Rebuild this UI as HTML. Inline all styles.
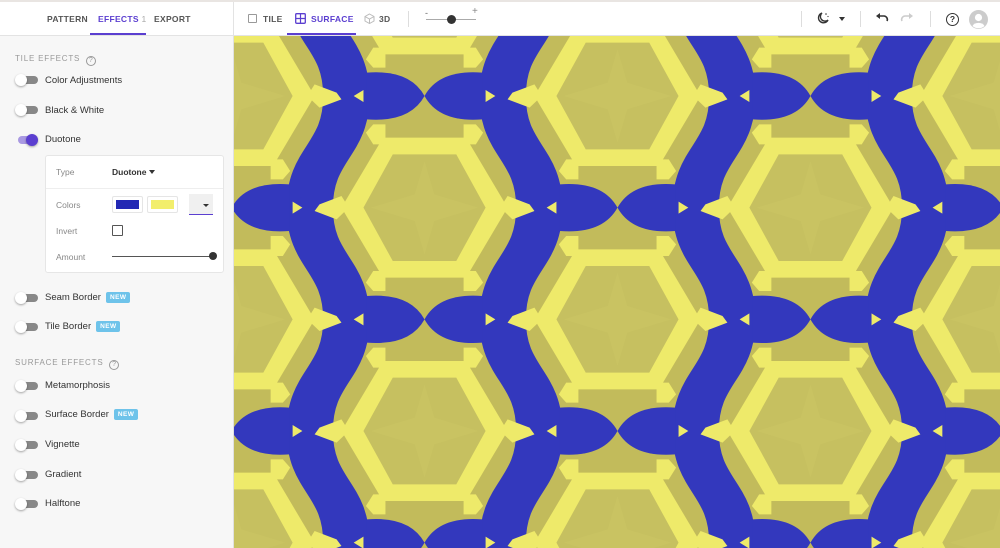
<!DOCTYPE html>
<html><head><meta charset="utf-8"><style>
*{box-sizing:border-box;margin:0;padding:0}
html,body{width:1000px;height:548px;overflow:hidden}
body{font-family:"Liberation Sans",sans-serif;background:#fff;position:relative;color:#333}
.topstrip{position:absolute;left:0;top:0;width:1000px;height:2px;background:#e9e5e2}
.bar{position:absolute;left:0;top:2px;width:1000px;height:34px;background:#fff;border-bottom:1px solid #e3e3e3}
.tab{position:absolute;top:12px;font-size:8.5px;font-weight:bold;letter-spacing:.3px;color:#555}
.side{position:absolute;left:0;top:36px;width:234px;height:512px;background:#f7f7f7;border-right:1px solid #e0e0e0}
.sec{position:absolute;left:15px;font-size:8px;letter-spacing:.8px;color:#999}
.q{display:inline-block;width:10px;height:10px;border:1px solid #999;border-radius:50%;font-size:7px;text-align:center;line-height:8px;margin-left:6px;vertical-align:-1px}
.row{position:absolute;left:15px;font-size:9.5px;color:#333}
.tg{position:absolute;left:15px;width:23px;height:12px}
.tg .tr{position:absolute;left:3px;top:2px;width:20px;height:8px;border-radius:4px;background:#888}
.tg .kn{position:absolute;left:0;top:0;width:12px;height:12px;border-radius:50%;background:#fff;box-shadow:0 1px 2px rgba(0,0,0,.35)}
.new{display:inline-block;background:#6ec3ea;color:#fff;font-size:6.5px;font-weight:bold;padding:2px 4px;border-radius:2px;margin-left:5px;vertical-align:1px;letter-spacing:.4px}
.panel{position:absolute;left:45px;top:155px;width:179px;height:118px;background:#fff;border:1px solid #e6e6e6;border-radius:3px}
.lbl{position:absolute;left:10px;font-size:8.5px;color:#888}
</style></head><body>
<div class="topstrip"></div>
<div class="bar">
 <div class="tab" style="left:47px">PATTERN</div>
 <div class="tab" style="left:98px;color:#5b3fd0">EFFECTS <span style="font-weight:normal;color:#aaa">1</span></div>
 <div style="position:absolute;left:90px;top:31px;width:56px;height:2px;background:#5b3fd0"></div>
 <div class="tab" style="left:154px">EXPORT</div>
 <div style="position:absolute;left:233px;top:0;width:1px;height:34px;background:#e3e3e3"></div>
 <div style="position:absolute;left:248px;top:12px;width:9px;height:9px;border:1px solid #999;border-radius:1px"></div>
 <div class="tab" style="left:263px">TILE</div>
 <svg style="position:absolute;left:295px;top:11px" width="11" height="11" viewBox="0 0 11 11"><rect x="0.7" y="0.7" width="9.6" height="9.6" rx="1" fill="none" stroke="#5b3fd0" stroke-width="1.3"/><path d="M5.5 1V10M1 5.5H10" stroke="#5b3fd0" stroke-width="1.2"/></svg>
 <div class="tab" style="left:311px;color:#5b3fd0">SURFACE</div>
 <div style="position:absolute;left:287px;top:31px;width:69px;height:2px;background:#5b3fd0"></div>
 <svg style="position:absolute;left:364px;top:11px" width="11" height="11" viewBox="0 0 11 11"><path d="M5.5 1L10 3.5V8L5.5 10.5L1 8V3.5Z M1 3.5L5.5 6L10 3.5M5.5 6V10.5" fill="none" stroke="#bbb" stroke-width="1"/></svg>
 <div class="tab" style="left:379px">3D</div>
 <div style="position:absolute;left:408px;top:9px;width:1px;height:16px;background:#ddd"></div>
 <div style="position:absolute;left:425px;top:6px;font-size:9px;color:#666">-</div>
 <div style="position:absolute;left:472px;top:4px;font-size:10px;color:#888">+</div>
 <div style="position:absolute;left:426px;top:17px;width:50px;height:1px;background:#aaa"></div>
 <div style="position:absolute;left:447px;top:13px;width:9px;height:9px;border-radius:50%;background:#333"></div>
 <div style="position:absolute;left:801px;top:9px;width:1px;height:16px;background:#ddd"></div>
 <svg style="position:absolute;left:816px;top:9px" width="14" height="14" viewBox="0 0 14 14"><path d="M6 2A5 5 0 1 0 12 9A4 4 0 0 1 6 2Z" fill="none" stroke="#333" stroke-width="1.4"/><circle cx="10" cy="3" r=".8" fill="#333"/><circle cx="12" cy="5.5" r=".6" fill="#333"/></svg>
 <div style="position:absolute;left:839px;top:15px;border-left:3.5px solid transparent;border-right:3.5px solid transparent;border-top:4px solid #333"></div>
 <div style="position:absolute;left:860px;top:9px;width:1px;height:16px;background:#ddd"></div>
 <svg style="position:absolute;left:875px;top:10px" width="14" height="12" viewBox="0 0 14 12"><path d="M3 4H9A3.5 3.5 0 0 1 12 9" fill="none" stroke="#333" stroke-width="1.6"/><path d="M1 4L5 1V7Z" fill="#333"/></svg>
 <svg style="position:absolute;left:900px;top:10px" width="14" height="12" viewBox="0 0 14 12"><path d="M11 4H5A3.5 3.5 0 0 0 2 9" fill="none" stroke="#ccc" stroke-width="1.6"/><path d="M13 4L9 1V7Z" fill="#ccc"/></svg>
 <div style="position:absolute;left:930px;top:9px;width:1px;height:16px;background:#ddd"></div>
 <div style="position:absolute;left:946px;top:11px;width:13px;height:13px;border:1.4px solid #333;border-radius:50%;font-size:8.5px;font-weight:bold;text-align:center;line-height:11px">?</div>
 <svg style="position:absolute;left:969px;top:8px" width="19" height="19" viewBox="0 0 19 19"><circle cx="9.5" cy="9.5" r="9.5" fill="#ccc"/><circle cx="9.5" cy="7.5" r="3.6" fill="#fff"/><path d="M3.5 16A6.5 5 0 0 1 15.5 16A9 9 0 0 1 3.5 16Z" fill="#fff"/></svg>
</div>

<div class="side">
 <div class="sec" style="top:18px">TILE EFFECTS<span class="q">?</span></div>
 <div class="tg" style="top:38px"><div class="tr"></div><div class="kn"></div></div><div class="row" style="left:45px;top:39px">Color Adjustments</div>
 <div class="tg" style="top:68px"><div class="tr"></div><div class="kn"></div></div><div class="row" style="left:45px;top:69px">Black &amp; White</div>
 <div class="tg" style="top:98px"><div class="tr" style="background:#a999e2"></div><div class="kn" style="left:11px;background:#5b3fd0"></div></div><div class="row" style="left:45px;top:98px">Duotone</div>
 <div class="tg" style="top:256px"><div class="tr"></div><div class="kn"></div></div><div class="row" style="left:45px;top:256px">Seam Border<span class="new">NEW</span></div>
 <div class="tg" style="top:285px"><div class="tr"></div><div class="kn"></div></div><div class="row" style="left:45px;top:285px">Tile Border<span class="new">NEW</span></div>
 <div class="sec" style="top:322px">SURFACE EFFECTS<span class="q">?</span></div>
 <div class="tg" style="top:344px"><div class="tr"></div><div class="kn"></div></div><div class="row" style="left:45px;top:344px">Metamorphosis</div>
 <div class="tg" style="top:374px"><div class="tr"></div><div class="kn"></div></div><div class="row" style="left:45px;top:373px">Surface Border<span class="new">NEW</span></div>
 <div class="tg" style="top:403px"><div class="tr"></div><div class="kn"></div></div><div class="row" style="left:45px;top:403px">Vignette</div>
 <div class="tg" style="top:433px"><div class="tr"></div><div class="kn"></div></div><div class="row" style="left:45px;top:433px">Gradient</div>
 <div class="tg" style="top:462px"><div class="tr"></div><div class="kn"></div></div><div class="row" style="left:45px;top:462px">Halftone</div>
</div>
<div class="panel">
 <div class="lbl" style="top:11px">Type</div>
 <div style="position:absolute;left:66px;top:11px;font-size:8.5px;font-weight:bold;color:#333">Duotone</div>
 <div style="position:absolute;left:103px;top:14px;border-left:3.5px solid transparent;border-right:3.5px solid transparent;border-top:4px solid #333"></div>
 <div style="position:absolute;left:0;top:32px;width:177px;height:1px;background:#eee"></div>
 <div class="lbl" style="top:44px">Colors</div>
 <div style="position:absolute;left:66px;top:40px;width:31px;height:17px;border:1px solid #e5e5e5;border-radius:2px;padding:3px"><div style="width:100%;height:100%;background:#2228b4"></div></div>
 <div style="position:absolute;left:101px;top:40px;width:31px;height:17px;border:1px solid #e5e5e5;border-radius:2px;padding:3px"><div style="width:100%;height:100%;background:#f2ee6c"></div></div>
 <div style="position:absolute;left:143px;top:38px;width:24px;height:21px;background:#f0f0f0;border-bottom:1.5px solid #5b3fd0"></div>
 <div style="position:absolute;left:157px;top:48px;border-left:3px solid transparent;border-right:3px solid transparent;border-top:3.5px solid #333"></div>
 <div class="lbl" style="top:70px">Invert</div>
 <div style="position:absolute;left:66px;top:69px;width:11px;height:11px;border:1.3px solid #555;border-radius:1px"></div>
 <div class="lbl" style="top:96px">Amount</div>
 <div style="position:absolute;left:66px;top:100px;width:102px;height:1px;background:#555"></div>
 <div style="position:absolute;left:163px;top:96px;width:8px;height:8px;border-radius:50%;background:#333"></div>
</div>

<svg style="position:absolute;left:234px;top:36px;display:block" width="766" height="512" viewBox="0 0 1568 1536" preserveAspectRatio="none">
<defs>
 <g id="hx">
  <polygon points="-170,0 -85,-210 85,-210 170,0 85,210 -85,210" fill="#eeea6a"/>
  <polygon points="-125,0 -65,-160 65,-160 125,0 65,160 -65,160" fill="#c6c060"/>
  <path d="M0,-140L20,-40L110,0L20,40L0,140L-20,40L-110,0L-20,-40Z" fill="#cbc564" opacity=".7"/>
 </g>
 <g id="bw">
  <path d="M-118,-70Q-30,-80 0,0Q-30,80 -118,70Z" fill="#3338bd"/>
  <path d="M118,-70Q30,-80 0,0Q30,80 118,70Z" fill="#3338bd"/>
 </g>
 <g id="tri">
  <polygon points="-145,0 -125,-18 -125,18" fill="#eeea6a"/>
  <polygon points="145,0 125,-18 125,18" fill="#eeea6a"/>
  <polygon points="-225,-35 -180,-10 -170,10 -215,35 -240,0" fill="#eeea6a"/>
  <polygon points="225,-35 180,-10 170,10 215,35 240,0" fill="#eeea6a"/>
  <polygon points="-105,-85 -80,-85 -80,-145 -105,-145 -120,-110" fill="#eeea6a"/>
  <polygon points="105,-85 80,-85 80,-145 105,-145 120,-110" fill="#eeea6a"/>
  <polygon points="-105,85 -80,85 -80,145 -105,145 -120,110" fill="#eeea6a"/>
  <polygon points="105,85 80,85 80,145 105,145 120,110" fill="#eeea6a"/>
 </g>
 <path id="bandA" d="M0,-155C0,10 -75,15 -75,180C-75,345 0,350 0,515C0,680 -75,685 -75,850C-75,1015 0,1020 0,1185C0,1350 -75,1355 -75,1520C-75,1685 0,1690 0,1855" fill="none" stroke="#3338bd" stroke-width="95"/>
 <path id="bandB" d="M0,-155C0,10 75,15 75,180C75,345 0,350 0,515C0,680 75,685 75,850C75,1015 0,1020 0,1185C0,1350 75,1355 75,1520C75,1685 0,1690 0,1855" fill="none" stroke="#3338bd" stroke-width="95"/>
</defs>
<rect width="1568" height="1536" fill="#c2bb5b"/>
<use href="#bandA" x="625"/><use href="#bandB" x="945"/>
<use href="#bandA" x="1415"/><use href="#bandB" x="155"/>
<use href="#bandA" x="-165"/><use href="#bandB" x="1735"/>
<use href="#bw" x="-5" y="-155"/><use href="#bw" x="785" y="-155"/><use href="#bw" x="1575" y="-155"/>
<use href="#bw" x="-5" y="515"/><use href="#bw" x="785" y="515"/><use href="#bw" x="1575" y="515"/>
<use href="#bw" x="-5" y="1185"/><use href="#bw" x="785" y="1185"/><use href="#bw" x="1575" y="1185"/>
<use href="#bw" x="390" y="180"/><use href="#bw" x="1180" y="180"/>
<use href="#bw" x="390" y="850"/><use href="#bw" x="1180" y="850"/>
<use href="#bw" x="390" y="1520"/><use href="#bw" x="1180" y="1520"/>
<use href="#hx" x="390" y="-155"/><use href="#hx" x="1180" y="-155"/>
<use href="#hx" x="390" y="515"/><use href="#hx" x="1180" y="515"/>
<use href="#hx" x="390" y="1185"/><use href="#hx" x="1180" y="1185"/>
<use href="#hx" x="-5" y="180"/><use href="#hx" x="785" y="180"/><use href="#hx" x="1575" y="180"/>
<use href="#hx" x="-5" y="850"/><use href="#hx" x="785" y="850"/><use href="#hx" x="1575" y="850"/>
<use href="#hx" x="-5" y="1520"/><use href="#hx" x="785" y="1520"/><use href="#hx" x="1575" y="1520"/>
<use href="#tri" x="-5" y="-155"/><use href="#tri" x="785" y="-155"/><use href="#tri" x="1575" y="-155"/>
<use href="#tri" x="-5" y="515"/><use href="#tri" x="785" y="515"/><use href="#tri" x="1575" y="515"/>
<use href="#tri" x="-5" y="1185"/><use href="#tri" x="785" y="1185"/><use href="#tri" x="1575" y="1185"/>
<use href="#tri" x="390" y="180"/><use href="#tri" x="1180" y="180"/>
<use href="#tri" x="390" y="850"/><use href="#tri" x="1180" y="850"/>
<use href="#tri" x="390" y="1520"/><use href="#tri" x="1180" y="1520"/>
</svg>
</body></html>
